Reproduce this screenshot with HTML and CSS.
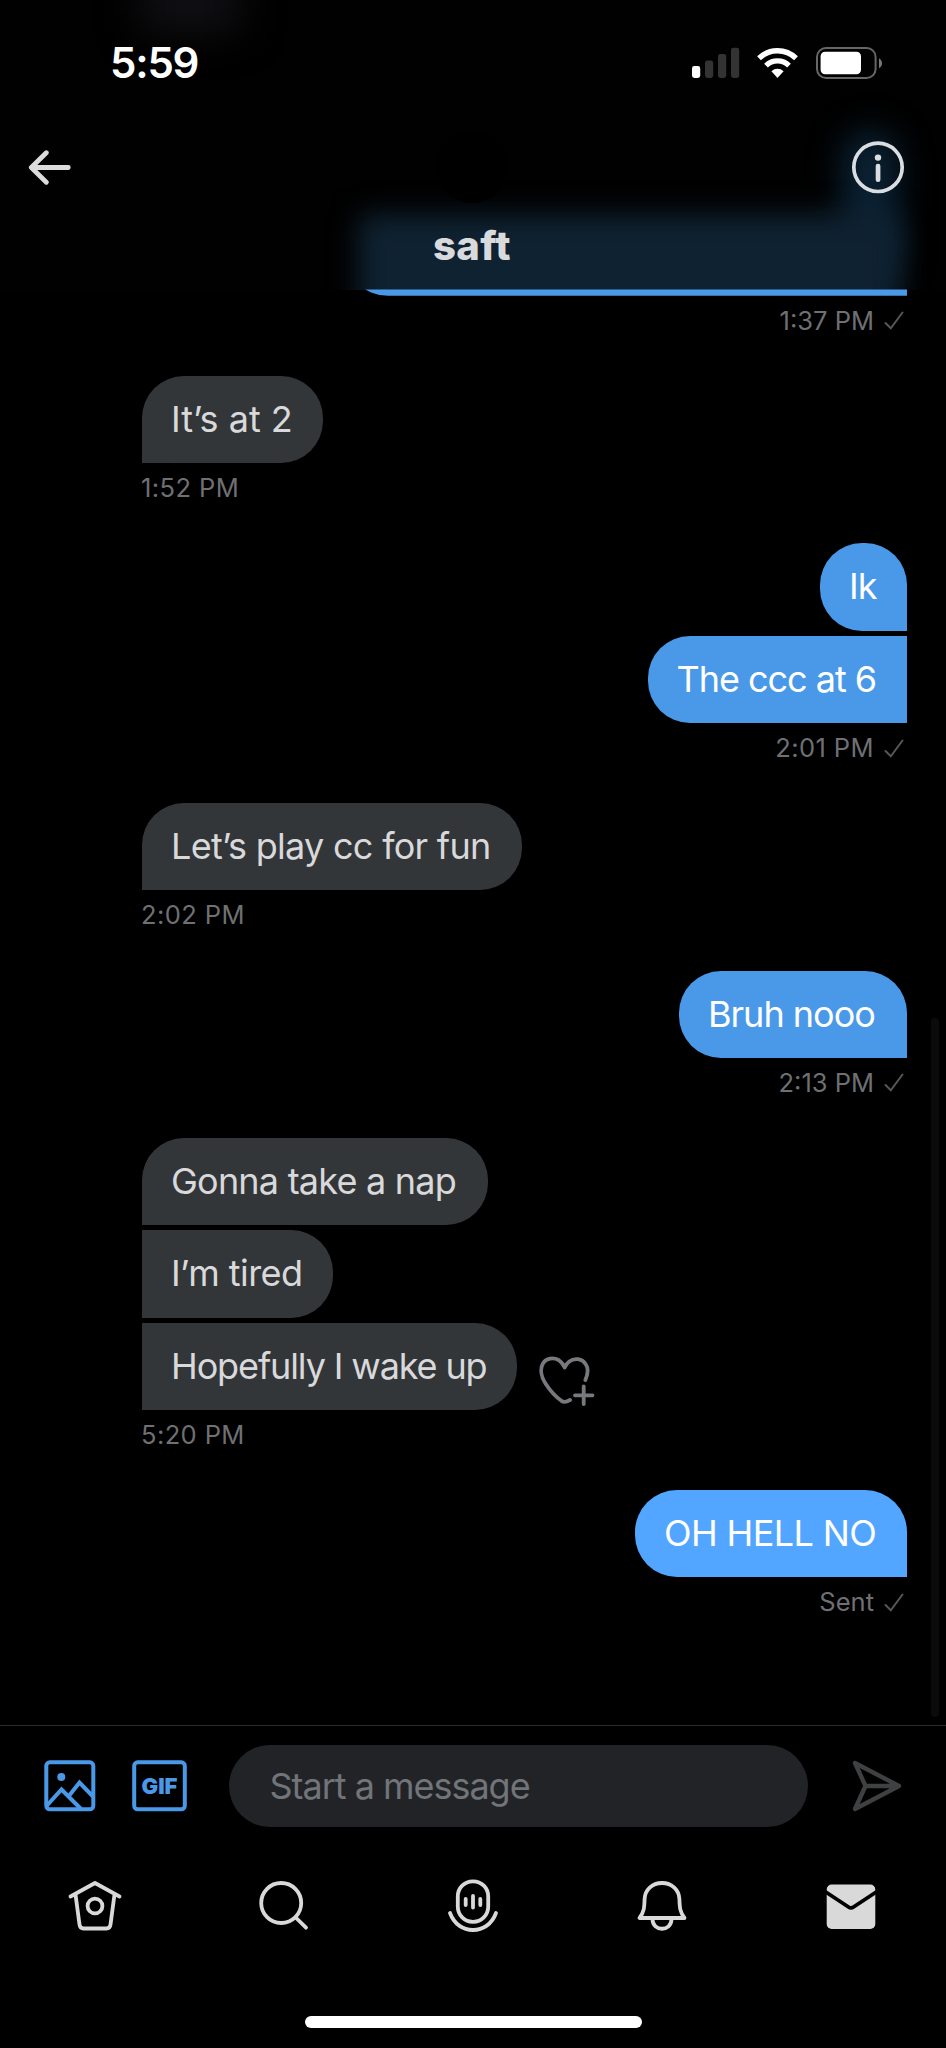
FILE: index.html
```
<!DOCTYPE html>
<html lang="en">
<head>
<meta charset="utf-8">
<title>saft</title>
<link rel="stylesheet" href="styles.css">
</head>
<body>
<div class="screen">
  <header class="header">
    <div class="glow glow-top"></div>
    <div class="glow glow-info"></div>
    <div class="glow glow-bubble"></div>
    <div class="status">
      <span class="clock">5:59</span>
      <svg class="status-icons" viewBox="0 0 192 34" width="192" height="34">
        <rect x="0" y="20" width="8.2" height="12" rx="2.4" fill="#fff"/>
        <g fill="#333"><rect x="13" y="14.5" width="8.2" height="17.5" rx="2.4"/><rect x="26" y="8" width="8.2" height="24" rx="2.4"/><rect x="39" y="1.7" width="8.2" height="30.3" rx="2.4"/></g>
        <g fill="none" stroke="#fff" stroke-width="5.4">
          <path d="M67 12.3a26.5 26.5 0 0 1 37 0"/><path d="M74 19.6a16.4 16.4 0 0 1 23 0"/>
        </g>
        <path d="M79.4 25.2a9 9 0 0 1 12.2 0L85.5 32z" fill="#fff"/>
        <rect x="125" y="2" width="58.6" height="30" rx="9" fill="none" stroke="#666" stroke-width="2"/>
        <rect x="128.6" y="5.800" width="40.4" height="22.400" rx="4.5" fill="#fff"/>
        <path d="M187 12.3c4 2 4 8 0 10z" fill="#777"/>
      </svg>
    </div>
    <div class="bar">
      <svg class="back" viewBox="0 0 44 36" width="44" height="36" fill="none" stroke="#dcdcdc" stroke-width="4.8" stroke-linecap="round" stroke-linejoin="round"><path d="M40.3 18.500H3.500M18.300 3.700L3.300 18.500l15 14.800"/></svg>
      <div class="avatar"></div>
      <svg class="info" viewBox="0 0 54 54" width="54" height="54"><circle cx="27" cy="27.300" r="24.200" fill="none" stroke="#dadee2" stroke-width="3.700"/><circle cx="27" cy="17.600" r="3.200" fill="#dadee2"/><rect x="24.700" y="23.800" width="4.700" height="18.300" rx="2.300" fill="#dadee2"/></svg>
    </div>
    <h1 class="name">saft</h1>
  </header>

  <main class="thread">
    <section class="group out first">
      <div class="tail"></div>
      <div class="meta"><span>1:37 PM</span><svg class="check" viewBox="0 0 20 19"><path d="M1.500 12l5.300 5.300L18.500 1.500"/></svg></div>
    </section>
    <section class="group in">
      <div class="bubble w-at2">It’s at 2</div>
      <div class="meta wide">1:52 PM</div>
    </section>
    <section class="group out">
      <div class="bubble w-ik">Ik</div>
      <div class="bubble w-ccc">The ccc at 6</div>
      <div class="meta wide"><span>2:01 PM</span><svg class="check" viewBox="0 0 20 19"><path d="M1.500 12l5.300 5.300L18.500 1.500"/></svg></div>
    </section>
    <section class="group in">
      <div class="bubble w-play">Let’s play cc for fun</div>
      <div class="meta wide">2:02 PM</div>
    </section>
    <section class="group out">
      <div class="bubble w-bruh">Bruh nooo</div>
      <div class="meta"><span>2:13 PM</span><svg class="check" viewBox="0 0 20 19"><path d="M1.500 12l5.300 5.300L18.500 1.500"/></svg></div>
    </section>
    <section class="group in">
      <div class="bubble w-nap">Gonna take a nap</div>
      <div class="bubble w-tired">I’m tired</div>
      <div class="reactable">
        <div class="bubble w-wake">Hopefully I wake up</div>
        <svg class="react" viewBox="0 0 56 50" width="56" height="50" fill="none" stroke="#77797c" stroke-width="3.800" stroke-linecap="round" stroke-linejoin="round"><path d="M46.400 24C49 18 49.400 12 46.600 8 43 2.600 35.600 1.500 30.300 5.500 28 7.200 26.500 9.500 25.700 11.500 24.800 9.200 22.500 6 19.500 4 14 .9 7.200 2.500 4.200 7 .8 12.500 2 20.500 6.500 27.500 11 34.500 17.500 41.500 23 45.300 25.500 46.600 28 45.800 31 44"/><path d="M44.700 30.500v17.500M36 39.300h17.500"/></svg>
      </div>
      <div class="meta wide">5:20 PM</div>
    </section>
    <section class="group out">
      <div class="bubble fresh w-hell">OH HELL NO</div>
      <div class="meta"><span>Sent</span><svg class="check" viewBox="0 0 20 19"><path d="M1.500 12l5.300 5.300L18.500 1.500"/></svg></div>
    </section>
    <div class="scrollbar"></div>
  </main>

  <footer class="footer">
    <div class="composer">
      <svg viewBox="0 0 52 52" width="52" height="52" fill="none" stroke="#4a99e9" stroke-width="4"><rect x="2.300" y="2.300" width="47" height="47" rx="3.500"/><path d="M2.500 46L17.500 29.500l19.500 19.500M24.500 36.500L35.500 22.500l13.500 14"/><circle cx="17.300" cy="17" r="4" fill="#4a99e9" stroke="none"/></svg>
      <svg class="gif" viewBox="0 0 55 52" width="55" height="52"><rect x="2.200" y="2.300" width="50.600" height="47" rx="3.500" fill="none" stroke="#4a99e9" stroke-width="4"/><text class="gif-text" x="9.500" y="33.500" textLength="36" lengthAdjust="spacingAndGlyphs">GIF</text></svg>
      <div class="field">Start a message</div>
      <svg class="send" viewBox="0 0 50 52" width="50" height="52" fill="none" stroke="#3f4042" stroke-width="4.400" stroke-linejoin="round"><path d="M3 3l44 23L3 49l10.500-23zM13.500 26H46"/></svg>
    </div>
    <nav class="tabs">
      <div class="tab"><svg viewBox="0 0 56 56" width="56" height="56" fill="none" stroke="#d9d9d9" stroke-width="3.800" stroke-linecap="round" stroke-linejoin="round"><path d="M3.500 19.500L28 6l24.500 13.500M8.500 17.500l4 30q.5 4 4 4h23q3.500 0 4-4l4-30"/><circle cx="28" cy="29" r="7.400"/></svg></div>
      <div class="tab"><svg viewBox="0 0 56 56" width="56" height="56" fill="none" stroke="#d9d9d9" stroke-width="3.800" stroke-linecap="round"><circle cx="25.200" cy="26" r="20"/><path d="M39.700 40.500L50 50.700"/></svg></div>
      <div class="tab"><svg viewBox="0 0 56 56" width="56" height="56" fill="none" stroke="#d9d9d9" stroke-width="3.800" stroke-linecap="round"><rect x="12.800" y="4.300" width="30.400" height="40.500" rx="15"/><path d="M5 36c4 11 13 17 23 17s19-6 23-17M20.700 22v6M28 19v11.500M35.300 22v6"/></svg></div>
      <div class="tab"><svg viewBox="0 0 56 56" width="56" height="56" fill="none" stroke="#d9d9d9" stroke-width="3.800" stroke-linecap="round" stroke-linejoin="round"><path d="M28 6c-10 0-17 7-17.400 16C10.300 31 10 35 5.500 41h45C46 35 45.700 31 45.400 22 45 13 38 6 28 6zM18.500 42c0 13 19 13 19 0"/></svg></div>
      <div class="tab"><svg viewBox="0 0 56 56" width="56" height="56"><rect x="3.700" y="7.500" width="48.600" height="44.500" rx="5" fill="#d9d9d9"/><path d="M2 14.500L25.500 30q2.500 1.700 5 0L54 14.500" fill="none" stroke="#000" stroke-width="3.800"/></svg></div>
    </nav>
    <div class="home-indicator"></div>
  </footer>
</div>
</body>
</html>
```
FILE: styles.css
```
* { box-sizing: border-box; }
body { margin: 0; background: #000; font-family: Inter, "Liberation Sans", sans-serif; }
svg { display: block; flex: none; }
.screen { width: 946px; height: 2048px; display: flex; flex-direction: column; overflow: hidden; background: #000; }

.header { position: relative; height: 289.500px; flex: none; overflow: hidden; background: #010101; display: flex; flex-direction: column; }
.status, .bar, .name { position: relative; }
.glow { position: absolute; }
.glow-top { left: 140px; top: -30px; width: 100px; height: 62px; background: #101014; filter: blur(20px); }
.glow-bubble { left: 358px; top: 214px; width: 541px; height: 180px; border-radius: 10px; background: #0f2231; filter: blur(14px); }
.glow-info { left: 842px; top: 130px; width: 57px; height: 160px; border-radius: 28px; background: #0b2133; filter: blur(16px); }
.status { height: 124px; padding: 46px 62px 0 110px; display: flex; justify-content: space-between; }
.clock { font-size: 42px; line-height: 34px; font-weight: 600; color: #fff; letter-spacing: -1.2px; }
.bar { height: 86px; padding: 0 41px 0 28px; display: flex; align-items: center; justify-content: space-between; }
.avatar { width: 72px; height: 72px; border-radius: 50%; background: #000; margin-left: 21px; }
.name { margin: 12px 0 0; padding-right: 2px; text-align: center; font-size: 40px; line-height: 48px; font-weight: 800; letter-spacing: 0.400px; color: #d9dadb; }

.thread { position: relative; height: 1435.500px; flex: none; display: flex; flex-direction: column; padding: 0 39px 0 142px; }
.group { display: flex; flex-direction: column; gap: 5.200px; margin-bottom: 28.300px; }
.out { align-items: flex-end; }
.in { align-items: flex-start; }
.first { height: 58.200px; gap: 0; }
.tail { width: 561px; height: 87px; margin-top: -80.800px; border-radius: 42px 42px 0 42px; background: #4a99e9; clip-path: inset(80.800px 0 0 0); flex: none; }
.first .meta { margin-top: 5px; }
.bubble { height: 87.100px; padding: 0 29px; border-radius: 42px; font-size: 36px; line-height: 86px; white-space: nowrap; flex: none; }
.in .bubble { background: #333639; color: #d9d9db; border-bottom-left-radius: 0; }
.in .bubble ~ .bubble, .reactable .bubble { border-top-left-radius: 0; }
.out .bubble { background: #4a99e9; color: #fff; border-bottom-right-radius: 0; }
.out .bubble ~ .bubble { border-top-right-radius: 0; }
.out .fresh { background: #53a6ff; }
.w-at2 { width: 181.300px; }
.w-ik { width: 87px; letter-spacing: -0.800px; }
.w-ccc { width: 259.500px; letter-spacing: -1.030px; }
.w-play { width: 380px; letter-spacing: -0.700px; }
.w-bruh { width: 228px; letter-spacing: -1px; }
.w-nap { width: 346.300px; letter-spacing: -0.780px; }
.w-tired { width: 191px; letter-spacing: -0.550px; }
.w-wake { width: 375.200px; letter-spacing: -1.120px; }
.w-hell { width: 272px; letter-spacing: -0.620px; }
.reactable { display: flex; align-items: flex-end; gap: 22px; }
.react { margin-bottom: 4px; }
.meta { height: 46.900px; padding-top: 4px; display: flex; align-items: flex-start; gap: 10px; font-size: 25.500px; line-height: 31px; color: #6e7073; white-space: nowrap; }
.wide { letter-spacing: 0.400px; }
.out .meta { padding-right: 3px; }
.in .meta { margin-left: -1px; }
.check { width: 20px; height: 19px; margin-top: 6.500px; fill: none; stroke: #55575a; stroke-width: 2; stroke-linecap: round; }
.scrollbar { position: absolute; left: 931px; top: 728.500px; width: 8px; height: 699px; border-radius: 4px; background: #0b0b0b; }

.footer { height: 323px; flex: none; border-top: 1px solid #2b2c2f; display: flex; flex-direction: column; align-items: center; }
.composer { width: 100%; height: 120px; padding: 0 44px 0 44px; display: flex; align-items: center; }
.gif { margin-left: 36px; }
.gif-text { font: 900 22px Inter, sans-serif; fill: #4a99e9; }
.field { width: 579px; height: 82px; margin-left: 41.500px; padding-left: 41px; border-radius: 41px; background: #212327; color: #717478; font-size: 36px; letter-spacing: -1.020px; line-height: 82px; white-space: nowrap; }
.send { margin-left: auto; }
.tabs { width: 100%; height: 120px; display: grid; grid-template-columns: repeat(5, 1fr); }
.tab { display: flex; justify-content: center; padding-top: 31px; }
.home-indicator { width: 337px; height: 12.500px; margin-top: 49.500px; border-radius: 7px; background: #fff; }
```
